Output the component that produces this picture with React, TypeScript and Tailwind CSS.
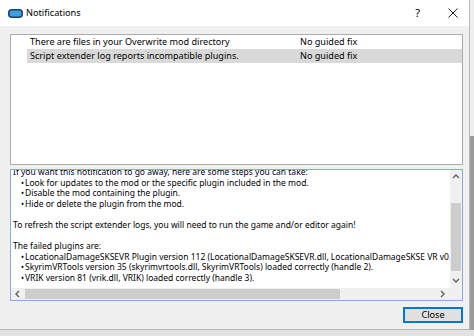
import React from "react";

const font = { fontFamily: '"Noto Sans", "Open Sans", Arial, sans-serif' };

const rows = [
  { text: "There are files in your Overwrite mod directory", fix: "No guided fix", selected: false },
  { text: "Script extender log reports incompatible plugins.", fix: "No guided fix", selected: true },
];

const Chevron = ({ dir }: { dir: "up" | "down" | "left" | "right" }) => {
  const pts = {
    up: "1,5 4,2 7,5",
    down: "1,2 4,5 7,2",
    left: "5,1 2,4 5,7",
    right: "2,1 5,4 2,7",
  }[dir];
  return (
    <svg width="8" height="8" viewBox="0 0 8 8">
      <polyline points={pts} fill="none" stroke="#606060" strokeWidth="1.4" />
    </svg>
  );
};

const Bullet = ({ children }: { children: React.ReactNode }) => (
  <div className="flex whitespace-nowrap pl-[8px]">
    <span className="w-[4px] shrink-0 text-[8px]">•</span>
    <span className="shrink-0">{children}</span>
  </div>
);

export default function App() {
  return (
    <div className="w-[474px] h-[336px] bg-[#dadada] flex flex-col overflow-hidden" style={font}>
      <div className="flex">
        <div className="w-[470px] h-[330px] bg-[#f0f0f0] border-r border-b border-[#b8b8b8] flex flex-col">
          {/* title bar */}
          <div className="h-[26px] bg-white flex items-center text-[9.2px] text-black">
            <svg className="ml-[8px]" width="15" height="9" viewBox="0 0 15 9">
              <rect x="0.75" y="0.75" width="13.5" height="7.5" rx="3" fill="#3b9fe0" stroke="#1d3f73" strokeWidth="1.5" />
            </svg>
            <span className="ml-[3px]">Notifications</span>
            <span className="ml-auto mr-[28px] text-[11px]">?</span>
            <svg className="mr-[11px]" width="10" height="10" viewBox="0 0 10 10">
              <path d="M0.5 0.5 L9.5 9.5 M9.5 0.5 L0.5 9.5" stroke="#222" strokeWidth="1" />
            </svg>
          </div>

          <div className="flex flex-col pl-[10px] pt-[8px]">
            {/* notifications list */}
            <div className="w-[453px] h-[131px] bg-white border border-[#adadad] text-[9.1px] text-black">
              {rows.map((r) => (
                <div key={r.text} className="flex h-[14px] pl-[16px]">
                  <div className={`flex flex-1 items-center ${r.selected ? "bg-[#d9d9d9]" : ""}`}>
                    <span className="w-[273px] pl-[3px] whitespace-nowrap">{r.text}</span>
                    <span className="whitespace-nowrap">{r.fix}</span>
                  </div>
                </div>
              ))}
            </div>

            {/* description text */}
            <div className="mt-[4px] w-[453px] h-[132px] bg-white border border-[#86acd9] flex flex-col">
              <div className="flex flex-1 overflow-hidden">
                <div className="flex-1 overflow-hidden text-[8.5px] leading-[10.6px] text-black pl-[2px]">
                  <div className="-mt-[3px]">
                    <div className="whitespace-nowrap">If you want this notification to go away, here are some steps you can take:</div>
                    <Bullet>Look for updates to the mod or the specific plugin included in the mod.</Bullet>
                    <Bullet>Disable the mod containing the plugin.</Bullet>
                    <Bullet>Hide or delete the plugin from the mod.</Bullet>
                    <div className="h-[10.6px]" />
                    <div className="whitespace-nowrap">To refresh the script extender logs, you will need to run the game and/or editor again!</div>
                    <div className="h-[10.6px]" />
                    <div className="whitespace-nowrap">The failed plugins are:</div>
                    <Bullet>LocationalDamageSKSEVR Plugin version 112 (LocationalDamageSKSEVR.dll, LocationalDamageSKSE VR v0.7) loaded correctly (handle 1).</Bullet>
                    <Bullet>SkyrimVRTools version 35 (skyrimvrtools.dll, SkyrimVRTools) loaded correctly (handle 2).</Bullet>
                    <Bullet>VRIK version 81 (vrik.dll, VRIK) loaded correctly (handle 3).</Bullet>
                  </div>
                </div>
                {/* vertical scrollbar */}
                <div className="w-[12px] shrink-0 bg-[#f0f0f0] flex flex-col">
                  <div className="h-[14px] flex items-center justify-center">
                    <Chevron dir="up" />
                  </div>
                  <div className="h-[19px]" />
                  <div className="h-[68px] mx-[1px] bg-[#cdcdcd]" />
                  <div className="flex-1" />
                  <div className="h-[14px] flex items-center justify-center">
                    <Chevron dir="down" />
                  </div>
                </div>
              </div>
              {/* horizontal scrollbar */}
              <div className="h-[12px] flex">
                <div className="flex-1 bg-[#f0f0f0] flex items-center">
                  <div className="w-[14px] flex justify-center">
                    <Chevron dir="left" />
                  </div>
                  <div className="w-[315px] h-[10px] bg-[#cdcdcd]" />
                  <div className="flex-1" />
                  <div className="w-[14px] flex justify-center">
                    <Chevron dir="right" />
                  </div>
                </div>
                <div className="w-[12px] bg-[#f0f0f0]" />
              </div>
            </div>

            {/* buttons */}
            <div className="flex justify-end w-[453px] mt-[6px]">
              <button className="w-[60px] h-[16px] bg-[#e1e1e1] border-2 border-[#0078d7] text-[9.1px] text-black leading-none flex items-center justify-center">
                Close
              </button>
            </div>
          </div>
        </div>
        <div className="flex-1 flex flex-col">
          <div className="h-[136px] bg-[#eeeeee]" />
          <div className="flex-1 bg-[#9a9a9a]" />
        </div>
      </div>
      <div className="flex-1 bg-[#e2e2e2]" />
    </div>
  );
}
